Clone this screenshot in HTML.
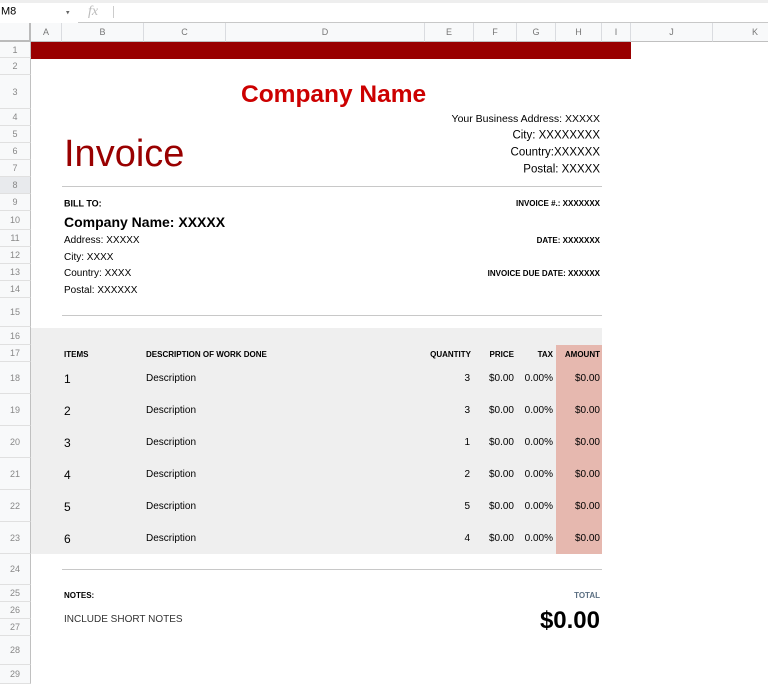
<!DOCTYPE html>
<html><head><meta charset="utf-8"><style>
*{margin:0;padding:0;box-sizing:border-box}
body{width:768px;height:684px;overflow:hidden;background:#fff;font-family:"Liberation Sans",Arial,sans-serif;position:relative;color:#000}
.a{position:absolute}
.t{position:absolute;transform:translateY(-50%);white-space:nowrap;line-height:1}
.r{text-align:right}
.rh{position:absolute;left:0;width:31px;background:#f8f9fa;border-bottom:1px solid #e0e0e0;border-right:1px solid #c0c0c0;font-size:9px;color:#888;text-align:center}
.ch{position:absolute;top:23px;height:19px;background:#f8f9fa;border-right:1px solid #dadce0;border-bottom:1px solid #c0c0c0;font-size:9px;color:#777;text-align:center;line-height:19px}
.s{font-size:10px}
.b{font-weight:bold}
</style></head><body>
<div class="a" style="left:0;top:0;width:768px;height:3px;background:#eee"></div>
<div class="t" style="left:1px;top:12px;font-size:11px">M8</div>
<div class="t" style="left:66px;top:13px;font-size:7px;color:#666">▾</div>
<div class="a" style="left:78px;top:3px;width:690px;height:20px;border-bottom:1px solid #c8c8c8"></div>
<div class="t" style="left:88px;top:12px;font-size:14px;color:#bbb;font-family:'Liberation Serif',serif;font-style:italic">fx</div>
<div class="a" style="left:113px;top:6px;width:1px;height:12px;background:#ccc"></div>
<div class="ch" style="left:0;width:31px;border-right:2px solid #bbb;border-bottom:2px solid #bbb"></div>
<div class="ch" style="left:31px;width:31px">A</div>
<div class="ch" style="left:62px;width:82px">B</div>
<div class="ch" style="left:144px;width:82px">C</div>
<div class="ch" style="left:226px;width:199px">D</div>
<div class="ch" style="left:425px;width:49px">E</div>
<div class="ch" style="left:474px;width:43px">F</div>
<div class="ch" style="left:517px;width:39px">G</div>
<div class="ch" style="left:556px;width:46px">H</div>
<div class="ch" style="left:602px;width:29px">I</div>
<div class="ch" style="left:631px;width:82px">J</div>
<div class="ch" style="left:713px;width:85px">K</div>
<div class="rh" style="top:42px;height:16px;line-height:16px">1</div>
<div class="rh" style="top:58px;height:17px;line-height:17px">2</div>
<div class="rh" style="top:75px;height:34px;line-height:34px">3</div>
<div class="rh" style="top:109px;height:17px;line-height:17px">4</div>
<div class="rh" style="top:126px;height:17px;line-height:17px">5</div>
<div class="rh" style="top:143px;height:17px;line-height:17px">6</div>
<div class="rh" style="top:160px;height:17px;line-height:17px">7</div>
<div class="rh" style="top:177px;height:17px;line-height:17px;background:#e8eaed">8</div>
<div class="rh" style="top:194px;height:17px;line-height:17px">9</div>
<div class="rh" style="top:211px;height:19px;line-height:19px">10</div>
<div class="rh" style="top:230px;height:17px;line-height:17px">11</div>
<div class="rh" style="top:247px;height:17px;line-height:17px">12</div>
<div class="rh" style="top:264px;height:17px;line-height:17px">13</div>
<div class="rh" style="top:281px;height:17px;line-height:17px">14</div>
<div class="rh" style="top:298px;height:29px;line-height:29px">15</div>
<div class="rh" style="top:327px;height:18px;line-height:18px">16</div>
<div class="rh" style="top:345px;height:17px;line-height:17px">17</div>
<div class="rh" style="top:362px;height:32px;line-height:32px">18</div>
<div class="rh" style="top:394px;height:32px;line-height:32px">19</div>
<div class="rh" style="top:426px;height:32px;line-height:32px">20</div>
<div class="rh" style="top:458px;height:32px;line-height:32px">21</div>
<div class="rh" style="top:490px;height:32px;line-height:32px">22</div>
<div class="rh" style="top:522px;height:32px;line-height:32px">23</div>
<div class="rh" style="top:554px;height:31px;line-height:31px">24</div>
<div class="rh" style="top:585px;height:17px;line-height:17px">25</div>
<div class="rh" style="top:602px;height:17px;line-height:17px">26</div>
<div class="rh" style="top:619px;height:17px;line-height:17px">27</div>
<div class="rh" style="top:636px;height:29px;line-height:29px">28</div>
<div class="rh" style="top:665px;height:19px;line-height:19px">29</div>
<div class="a" style="left:31px;top:42px;width:600px;height:17px;background:#990000"></div>
<div class="t b" style="left:241px;top:95px;font-size:24.5px;color:#cc0000">Company Name</div>
<div class="t" style="left:64px;top:154px;font-size:38px;color:#990000">Invoice</div>
<div class="t r" style="right:168px;top:119px;font-size:10.5px">Your Business Address: XXXXX</div>
<div class="t r" style="right:168px;top:136px;font-size:11.5px">City: XXXXXXXX</div>
<div class="t r" style="right:168px;top:153px;font-size:11.5px">Country:XXXXXX</div>
<div class="t r" style="right:168px;top:170px;font-size:11.5px">Postal: XXXXX</div>
<div class="a" style="left:62px;top:186px;width:540px;height:1px;background:#c8c8c8"></div>
<div class="t b" style="left:64px;top:204px;font-size:9px">BILL TO:</div>
<div class="t b" style="left:64px;top:222px;font-size:14px">Company Name: XXXXX</div>
<div class="t s" style="left:64px;top:241px">Address: XXXXX</div>
<div class="t s" style="left:64px;top:258px">City: XXXX</div>
<div class="t s" style="left:64px;top:274px">Country: XXXX</div>
<div class="t s" style="left:64px;top:291px">Postal: XXXXXX</div>
<div class="t r b" style="right:168px;top:204px;font-size:8px">INVOICE #.: XXXXXXX</div>
<div class="t r b" style="right:168px;top:241px;font-size:8px">DATE: XXXXXXX</div>
<div class="t r b" style="right:168px;top:274px;font-size:8px">INVOICE DUE DATE: XXXXXX</div>
<div class="a" style="left:62px;top:315px;width:540px;height:1px;background:#c8c8c8"></div>
<div class="a" style="left:31px;top:328px;width:571px;height:226px;background:#efefef"></div>
<div class="a" style="left:556px;top:345px;width:46px;height:209px;background:#e6b8af"></div>
<div class="t b" style="left:64px;top:355px;font-size:8px">ITEMS</div>
<div class="t b" style="left:146px;top:355px;font-size:8px">DESCRIPTION OF WORK DONE</div>
<div class="t r b" style="right:297px;top:355px;font-size:8px">QUANTITY</div>
<div class="t r b" style="right:254px;top:355px;font-size:8px">PRICE</div>
<div class="t r b" style="right:215px;top:355px;font-size:8px">TAX</div>
<div class="t r b" style="right:168px;top:355px;font-size:8px">AMOUNT</div>

<div class="t" style="left:64px;top:379px;font-size:12px">1</div><div class="t s" style="left:146px;top:379px">Description</div><div class="t s r" style="right:298px;top:379px">3</div><div class="t s r" style="right:254px;top:379px">$0.00</div><div class="t s r" style="right:215px;top:379px">0.00%</div><div class="t s r" style="right:168px;top:379px">$0.00</div>
<div class="t" style="left:64px;top:411px;font-size:12px">2</div><div class="t s" style="left:146px;top:411px">Description</div><div class="t s r" style="right:298px;top:411px">3</div><div class="t s r" style="right:254px;top:411px">$0.00</div><div class="t s r" style="right:215px;top:411px">0.00%</div><div class="t s r" style="right:168px;top:411px">$0.00</div>
<div class="t" style="left:64px;top:443px;font-size:12px">3</div><div class="t s" style="left:146px;top:443px">Description</div><div class="t s r" style="right:298px;top:443px">1</div><div class="t s r" style="right:254px;top:443px">$0.00</div><div class="t s r" style="right:215px;top:443px">0.00%</div><div class="t s r" style="right:168px;top:443px">$0.00</div>
<div class="t" style="left:64px;top:475px;font-size:12px">4</div><div class="t s" style="left:146px;top:475px">Description</div><div class="t s r" style="right:298px;top:475px">2</div><div class="t s r" style="right:254px;top:475px">$0.00</div><div class="t s r" style="right:215px;top:475px">0.00%</div><div class="t s r" style="right:168px;top:475px">$0.00</div>
<div class="t" style="left:64px;top:507px;font-size:12px">5</div><div class="t s" style="left:146px;top:507px">Description</div><div class="t s r" style="right:298px;top:507px">5</div><div class="t s r" style="right:254px;top:507px">$0.00</div><div class="t s r" style="right:215px;top:507px">0.00%</div><div class="t s r" style="right:168px;top:507px">$0.00</div>
<div class="t" style="left:64px;top:539px;font-size:12px">6</div><div class="t s" style="left:146px;top:539px">Description</div><div class="t s r" style="right:298px;top:539px">4</div><div class="t s r" style="right:254px;top:539px">$0.00</div><div class="t s r" style="right:215px;top:539px">0.00%</div><div class="t s r" style="right:168px;top:539px">$0.00</div>

<div class="a" style="left:62px;top:569px;width:540px;height:1px;background:#c8c8c8"></div>
<div class="t b" style="left:64px;top:596px;font-size:8px">NOTES:</div>
<div class="t" style="left:64px;top:620px;font-size:10px;color:#333">INCLUDE SHORT NOTES</div>
<div class="t r b" style="right:168px;top:596px;font-size:8px;color:#5b6f82">TOTAL</div>
<div class="t r b" style="right:168px;top:621px;font-size:24px">$0.00</div>
</body></html>
